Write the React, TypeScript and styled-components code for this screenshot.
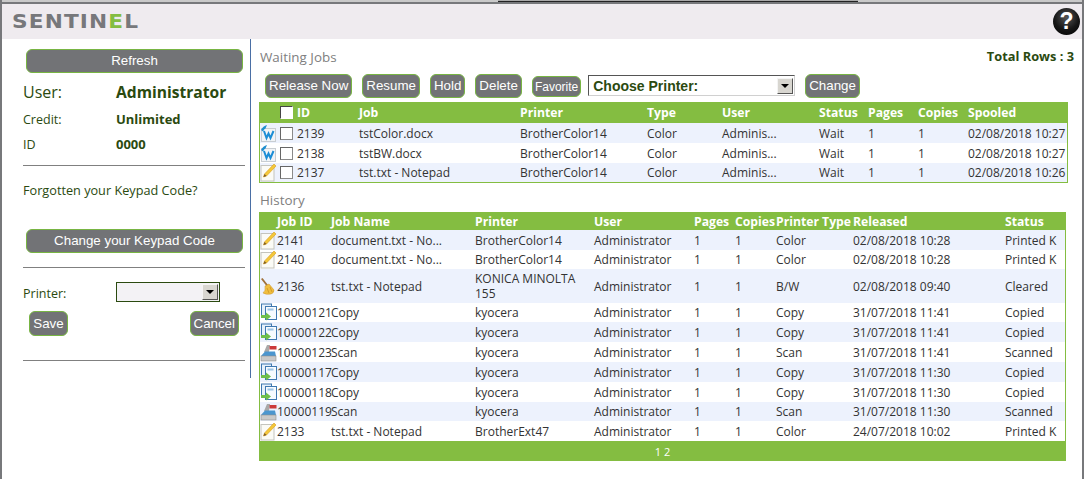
import React from 'react';
import styled, { createGlobalStyle } from 'styled-components';

const GREEN = '#84bd41';
const INK = '#2b4a10';
const TEXT = '#333333';
const SANS = '"Open Sans", "Noto Sans", sans-serif';
const ARIAL = '"Liberation Sans", Arial, sans-serif';

const GlobalStyle = createGlobalStyle`
    html, body {
        margin: 0;
        padding: 0;
        background: #ffffff;
    }
    body {
        font-family: ${SANS};
        color: ${TEXT};
    }
`;

const Page = styled.div`
    width: 1084px;
    height: 479px;
    box-sizing: border-box;
    overflow: hidden;
    background: #ffffff;
    border-left: 2px solid #77787b;
    border-right: 2px solid #77787b;
`;

const WindowEdge = styled.div`
    height: 4px;
    display: flex;
    flex-direction: column;
    margin: 0 -2px;
`;

const WindowTop = styled.div`
    height: 2px;
    background: #c9c9c9;
    padding-left: 498px;
`;

const WindowTab = styled.div`
    width: 360px;
    height: 2px;
    box-sizing: border-box;
    background: #a8a8a8;
    border-bottom: 1px solid #222222;
`;

const WindowLine = styled.div`
    height: 2px;
    background: #77787b;
`;

const Header = styled.header`
    height: 35px;
    background: #efebef;
    display: flex;
    align-items: center;
    justify-content: space-between;
    padding: 0 2px 0 10px;
`;

const Logo = styled.div`
    font-family: "DejaVu Sans", sans-serif;
    font-weight: 700;
    font-size: 19px;
    letter-spacing: 1px;
    color: #77787b;
    line-height: 1;
    transform: scaleX(1.14);
    transform-origin: left center;
`;

const LogoAccent = styled.span`
    color: ${GREEN};
`;

const HelpBadge = styled.div`
    width: 27px;
    height: 27px;
    border-radius: 50%;
    background: radial-gradient(circle at 50% 35%, #555555 0%, #161616 55%, #000000 100%);
    color: #ffffff;
    font-family: ${ARIAL};
    font-weight: 700;
    font-size: 23px;
    line-height: 27px;
    text-align: center;
`;

const Body = styled.div`
    display: flex;
    align-items: flex-start;
`;

const Sidebar = styled.aside`
    width: 249px;
    height: 339px;
    flex: none;
    box-sizing: border-box;
    border-right: 1px solid #4a6fa5;
    padding: 10px 5px 0 21px;
`;

const PillButton = styled.button<{ $small?: boolean }>`
    box-sizing: border-box;
    height: ${(p) => (p.$small ? '21px' : '24px')};
    margin: ${(p) => (p.$small ? '2px 0 0' : '0')};
    padding: 0 ${(p) => (p.$small ? '2px' : '3px')};
    background: #727376;
    color: #ffffff;
    border: 1px solid #78b543;
    border-radius: 6px;
    font-family: ${ARIAL};
    font-size: ${(p) => (p.$small ? '12px' : '13.33px')};
    line-height: 1;
    white-space: nowrap;
    flex: none;
`;

const WideButton = styled(PillButton)`
    display: block;
    width: 217px;
    margin-left: 3px;
`;

const InfoGrid = styled.dl`
    display: grid;
    grid-template-columns: 93px 1fr;
    margin: 0;
    color: ${INK};
`;

const InfoLabel = styled.dt<{ $large?: boolean }>`
    font-size: ${(p) => (p.$large ? '16px' : '12.5px')};
    height: ${(p) => (p.$large ? '34px' : '25px')};
    line-height: ${(p) => (p.$large ? '38px' : '25px')};
`;

const InfoValue = styled.dd<{ $large?: boolean }>`
    margin: 0;
    font-weight: 700;
    font-size: ${(p) => (p.$large ? '15.6px' : '13px')};
    height: ${(p) => (p.$large ? '34px' : '25px')};
    line-height: ${(p) => (p.$large ? '38px' : '25px')};
    white-space: nowrap;
`;

const Rule = styled.hr<{ $top: number }>`
    height: 1px;
    border: 0;
    background: #808080;
    margin: ${(p) => p.$top}px 0 0;
`;

const ForgottenText = styled.p`
    margin: 14px 0 29px;
    font-size: 12.7px;
    line-height: 20px;
    color: ${INK};
`;

const PrinterRow = styled.div`
    display: flex;
    align-items: center;
    height: 20px;
    margin: 14px 0 0;
    font-size: 12.5px;
    color: ${INK};
`;

const PrinterLabel = styled.span`
    width: 93px;
    padding-top: 2px;
`;

const ActionRow = styled.div`
    display: flex;
    justify-content: space-between;
    margin: 9px 6px 0 6px;
`;

const ActionButton = styled(PillButton)`
    height: 25px;
    min-width: 39px;
    padding: 0 3px;
`;

const DropDown = styled.div<{ $width: number; $flat?: boolean }>`
    box-sizing: border-box;
    width: ${(p) => p.$width}px;
    height: ${(p) => (p.$flat ? '20px' : '21px')};
    display: flex;
    align-items: center;
    justify-content: space-between;
    flex: none;
    background: ${(p) => (p.$flat ? '#f3f2f5' : '#ffffff')};
    border: 1px solid ${(p) => (p.$flat ? INK : '#d0d0d0')};
    border-top-color: ${(p) => (p.$flat ? INK : '#555555')};
    border-left-color: ${(p) => (p.$flat ? INK : '#555555')};
    padding-left: 4px;
    font-family: ${ARIAL};
    font-weight: 700;
    font-size: 14px;
    color: ${INK};
`;

const DropArrow = styled.span`
    width: 16px;
    height: 16px;
    margin-right: 1px;
    box-sizing: border-box;
    flex: none;
    display: flex;
    align-items: center;
    justify-content: center;
    background: #d8d6d0;
    border: 1px solid;
    border-color: #f4f4f4 #555555 #555555 #f4f4f4;
    &::after {
        content: '';
        border-left: 4px solid transparent;
        border-right: 4px solid transparent;
        border-top: 4px solid #000000;
    }
`;

const Main = styled.main`
    flex: 1;
    min-width: 0;
    padding: 8px 0 0 8px;
`;

const TitleRow = styled.div`
    display: flex;
    justify-content: space-between;
    padding: 0 8px 0 1px;
`;

const SectionTitle = styled.h2<{ $top?: number; $bottom?: number }>`
    margin: ${(p) => p.$top ?? 0}px 0 ${(p) => p.$bottom ?? 0}px;
    font-size: 13.4px;
    font-weight: 400;
    line-height: 20px;
    color: #808080;
`;

const HistoryTitle = styled(SectionTitle)`
    padding-left: 1px;
`;

const TotalRows = styled.div`
    font-size: 12.8px;
    font-weight: 700;
    line-height: 19px;
    color: ${INK};
`;

const Toolbar = styled.div`
    display: flex;
    align-items: flex-start;
    gap: 10px;
    margin: 7px 0 4px 6px;
    height: 24px;
`;

const PrinterPick = styled.div`
    margin: 1px 0 0 -3px;
`;

const GridTable = styled.table`
    width: 807px;
    table-layout: fixed;
    border-collapse: separate;
    border-spacing: 0;
    font-size: 12px;
    color: ${TEXT};
    border-left: 1px solid ${GREEN};
    border-right: 1px solid ${GREEN};
`;

const Column = styled.col<{ $w: number }>`
    width: ${(p) => p.$w}px;
`;

const HeadRow = styled.tr<{ $h: number }>`
    height: ${(p) => p.$h}px;
    background: ${GREEN};
`;

const HeadCell = styled.th`
    padding: 0;
    text-align: left;
    font-size: 12.2px;
    font-weight: 700;
    color: #ffffff;
    white-space: nowrap;
`;

const HistoryHeadCell = styled(HeadCell)`
    padding-top: 1px;
`;

const Row = styled.tr<{ $alt: boolean; $h: number }>`
    height: ${(p) => p.$h}px;
    background: ${(p) => (p.$alt ? '#edf2fd' : '#ffffff')};
`;

const Cell = styled.td`
    padding: 0;
    line-height: 15px;
    vertical-align: middle;
    white-space: nowrap;
    overflow: visible;
`;

const WrapCell = styled(Cell)`
    white-space: normal;
`;

const GreenEdge = styled.td`
    height: 1px;
    padding: 0;
    background: ${GREEN};
`;

const Pager = styled.td`
    height: 20px;
    padding: 0;
    background: ${GREEN};
    color: #ffffff;
    font-size: 11px;
    text-align: center;
`;

const Tick = styled.span<{ $head?: boolean }>`
    display: block;
    box-sizing: border-box;
    width: 13px;
    height: 13px;
    margin-left: 1px;
    background: #ffffff;
    border: 1px solid #8a8a8a;
    border-top-color: #666666;
    border-left-color: #666666;
    ${(p) => p.$head && 'border-color: #444444 #ffffff #ffffff #444444;'}
`;

const IconSvg = styled.svg`
    display: block;
    width: 17px;
    height: 19px;
`;

const NotepadIcon = () => (
    <IconSvg viewBox="0 0 17 19">
        <rect x="1" y="2.5" width="13" height="15.5" fill="#fbfbf6" stroke="#c4c4bd" />
        <path d="M3.5 14 L4.5 11 L14 1 L16 3 L6.5 13 Z" fill="#f4c83a" stroke="#d89c1c" strokeWidth="0.6" />
        <path d="M3.5 14 L4.5 11 L6.5 13 Z" fill="#7a5a2a" />
    </IconSvg>
);

const WordIcon = () => (
    <IconSvg viewBox="0 0 17 19">
        <rect x="1.5" y="4.5" width="14" height="13" fill="#f2f4f6" stroke="#c8cdd2" />
        <path d="M1 6 Q3 2 7 1 L5.5 4.5 Q4 5 3 7.5 Z" fill="#1f8fd0" />
        <path d="M4 7 L6.5 14 L8.5 9.5 L10.5 14 L13.5 7" fill="none" stroke="#1d8ed6" strokeWidth="2" />
    </IconSvg>
);

const BroomIcon = () => (
    <IconSvg viewBox="0 0 17 19">
        <path d="M1 2 L2.5 1 L8 8 L6.5 9 Z" fill="#a0713a" />
        <path d="M5 9 L9 7 L14 13 Q14 16 11 17 Q6 18 3 16 Q6 14 5 9 Z" fill="#f0be3e" stroke="#c98f20" strokeWidth="0.5" />
        <path d="M7 11 L9 16 M10 10 L12 15" stroke="#c98f20" strokeWidth="0.7" />
    </IconSvg>
);

const CopyIcon = () => (
    <IconSvg viewBox="0 0 17 19">
        <rect x="1.5" y="1" width="10" height="13" fill="#e6f0fa" stroke="#3f78b0" />
        <rect x="5.5" y="3.5" width="11" height="13" fill="#f7fbff" stroke="#3f78b0" />
        <rect x="7.5" y="5.5" width="6" height="2" fill="#9cc4e6" />
        <path d="M1 12 L6 12 L6 9.5 L11 13.5 L6 17.5 L6 15 L1 15 Z" fill="#6fbf4a" />
    </IconSvg>
);

const ScanIcon = () => (
    <IconSvg viewBox="0 0 17 19">
        <path d="M4 9 L7 2 L10 2 L9 9 Z" fill="#a9a9a9" />
        <rect x="9.5" y="3" width="7" height="3.5" fill="#cc3a3a" />
        <path d="M1 13 L5 8.5 L15 8.5 L16 13 Z" fill="#4b96cf" />
        <rect x="1" y="13" width="15" height="5" fill="#c9c9c9" stroke="#8f8f8f" strokeWidth="0.6" />
    </IconSvg>
);

type IconKind = 'word' | 'note' | 'broom' | 'copy' | 'scan';

const JobIcon = ({ kind }: { kind: IconKind }) => {
    if (kind === 'word') return <WordIcon />;
    if (kind === 'note') return <NotepadIcon />;
    if (kind === 'broom') return <BroomIcon />;
    if (kind === 'copy') return <CopyIcon />;
    return <ScanIcon />;
};

const waitingColumns = [19, 18, 62, 161, 127, 75, 97, 49, 50, 50, 99];
const waitingHeads = ['ID', 'Job', 'Printer', 'Type', 'User', 'Status', 'Pages', 'Copies', 'Spooled'];
const waitingRows: [IconKind, string, string, string][] = [
    ['word', '2139', 'tstColor.docx', '02/08/2018 10:27'],
    ['word', '2138', 'tstBW.docx', '02/08/2018 10:27'],
    ['note', '2137', 'tst.txt - Notepad', '02/08/2018 10:26'],
];

const historyColumns = [17, 54, 144, 119, 100, 41, 41, 77, 152, 60];
const historyHeads = ['Job ID', 'Job Name', 'Printer', 'User', 'Pages', 'Copies', 'Printer Type', 'Released', 'Status'];
const historyRows: { h: number; kind: IconKind; cells: string[] }[] = [
    { h: 20, kind: 'note', cells: ['2141', 'document.txt - No...', 'BrotherColor14', 'Color', '02/08/2018 10:28', 'Printed K'] },
    { h: 19, kind: 'note', cells: ['2140', 'document.txt - No...', 'BrotherColor14', 'Color', '02/08/2018 10:28', 'Printed K'] },
    { h: 34, kind: 'broom', cells: ['2136', 'tst.txt - Notepad', 'KONICA MINOLTA 155', 'B/W', '02/08/2018 09:40', 'Cleared'] },
    { h: 19, kind: 'copy', cells: ['10000121', 'Copy', 'kyocera', 'Copy', '31/07/2018 11:41', 'Copied'] },
    { h: 20, kind: 'copy', cells: ['10000122', 'Copy', 'kyocera', 'Copy', '31/07/2018 11:41', 'Copied'] },
    { h: 20, kind: 'scan', cells: ['10000123', 'Scan', 'kyocera', 'Scan', '31/07/2018 11:41', 'Scanned'] },
    { h: 20, kind: 'copy', cells: ['10000117', 'Copy', 'kyocera', 'Copy', '31/07/2018 11:30', 'Copied'] },
    { h: 20, kind: 'copy', cells: ['10000118', 'Copy', 'kyocera', 'Copy', '31/07/2018 11:30', 'Copied'] },
    { h: 19, kind: 'scan', cells: ['10000119', 'Scan', 'kyocera', 'Scan', '31/07/2018 11:30', 'Scanned'] },
    { h: 20, kind: 'note', cells: ['2133', 'tst.txt - Notepad', 'BrotherExt47', 'Color', '24/07/2018 10:02', 'Printed K'] },
];

const App = () => {
    return (
        <>
            <GlobalStyle />
            <Page>
                <WindowEdge>
                    <WindowTop>
                        <WindowTab />
                    </WindowTop>
                    <WindowLine />
                </WindowEdge>
                <Header>
                    <Logo>
                        SENTIN<LogoAccent>E</LogoAccent>L
                    </Logo>
                    <HelpBadge>?</HelpBadge>
                </Header>
                <Body>
                    <Sidebar>
                        <WideButton>Refresh</WideButton>
                        <InfoGrid>
                            <InfoLabel $large>User:</InfoLabel>
                            <InfoValue $large>Administrator</InfoValue>
                            <InfoLabel>Credit:</InfoLabel>
                            <InfoValue>Unlimited</InfoValue>
                            <InfoLabel>ID</InfoLabel>
                            <InfoValue>0000</InfoValue>
                        </InfoGrid>
                        <Rule $top={8} />
                        <ForgottenText>Forgotten your Keypad Code?</ForgottenText>
                        <WideButton>Change your Keypad Code</WideButton>
                        <Rule $top={14} />
                        <PrinterRow>
                            <PrinterLabel>Printer:</PrinterLabel>
                            <DropDown $width={104} $flat>
                                <span />
                                <DropArrow />
                            </DropDown>
                        </PrinterRow>
                        <ActionRow>
                            <ActionButton>Save</ActionButton>
                            <ActionButton>Cancel</ActionButton>
                        </ActionRow>
                        <Rule $top={24} />
                    </Sidebar>
                    <Main>
                        <TitleRow>
                            <SectionTitle>Waiting Jobs</SectionTitle>
                            <TotalRows>Total Rows : 3</TotalRows>
                        </TitleRow>
                        <Toolbar>
                            <PillButton>Release Now</PillButton>
                            <PillButton>Resume</PillButton>
                            <PillButton>Hold</PillButton>
                            <PillButton>Delete</PillButton>
                            <PillButton $small>Favorite</PillButton>
                            <PrinterPick>
                                <DropDown $width={207}>
                                    <span>Choose Printer:</span>
                                    <DropArrow />
                                </DropDown>
                            </PrinterPick>
                            <PillButton>Change</PillButton>
                        </Toolbar>
                        <GridTable>
                            <colgroup>
                                {waitingColumns.map((w, i) => (
                                    <Column key={i} $w={w} />
                                ))}
                            </colgroup>
                            <thead>
                                <HeadRow $h={21}>
                                    <HeadCell />
                                    <HeadCell>
                                        <Tick $head />
                                    </HeadCell>
                                    {waitingHeads.map((h) => (
                                        <HeadCell key={h}>{h}</HeadCell>
                                    ))}
                                </HeadRow>
                            </thead>
                            <tbody>
                                {waitingRows.map(([kind, id, job, spooled], i) => (
                                    <Row key={id} $alt={i % 2 === 0} $h={i === 2 ? 19 : 20}>
                                        <Cell>
                                            <JobIcon kind={kind} />
                                        </Cell>
                                        <Cell>
                                            <Tick />
                                        </Cell>
                                        <Cell>{id}</Cell>
                                        <Cell>{job}</Cell>
                                        <Cell>BrotherColor14</Cell>
                                        <Cell>Color</Cell>
                                        <Cell>Adminis...</Cell>
                                        <Cell>Wait</Cell>
                                        <Cell>1</Cell>
                                        <Cell>1</Cell>
                                        <Cell>{spooled}</Cell>
                                    </Row>
                                ))}
                                <tr>
                                    <GreenEdge colSpan={11} />
                                </tr>
                            </tbody>
                        </GridTable>
                        <HistoryTitle $top={7} $bottom={2}>
                            History
                        </HistoryTitle>
                        <GridTable>
                            <colgroup>
                                {historyColumns.map((w, i) => (
                                    <Column key={i} $w={w} />
                                ))}
                            </colgroup>
                            <thead>
                                <HeadRow $h={18}>
                                    <HistoryHeadCell />
                                    {historyHeads.map((h) => (
                                        <HistoryHeadCell key={h}>{h}</HistoryHeadCell>
                                    ))}
                                </HeadRow>
                            </thead>
                            <tbody>
                                {historyRows.map((row, i) => (
                                    <Row key={row.cells[0]} $alt={i % 2 === 0} $h={row.h}>
                                        <Cell>
                                            <JobIcon kind={row.kind} />
                                        </Cell>
                                        <Cell>{row.cells[0]}</Cell>
                                        <Cell>{row.cells[1]}</Cell>
                                        <WrapCell>{row.cells[2]}</WrapCell>
                                        <Cell>Administrator</Cell>
                                        <Cell>1</Cell>
                                        <Cell>1</Cell>
                                        <Cell>{row.cells[3]}</Cell>
                                        <Cell>{row.cells[4]}</Cell>
                                        <Cell>{row.cells[5]}</Cell>
                                    </Row>
                                ))}
                            </tbody>
                            <tfoot>
                                <tr>
                                    <Pager colSpan={10}>1 2</Pager>
                                </tr>
                            </tfoot>
                        </GridTable>
                    </Main>
                </Body>
            </Page>
        </>
    );
};

export default App;
